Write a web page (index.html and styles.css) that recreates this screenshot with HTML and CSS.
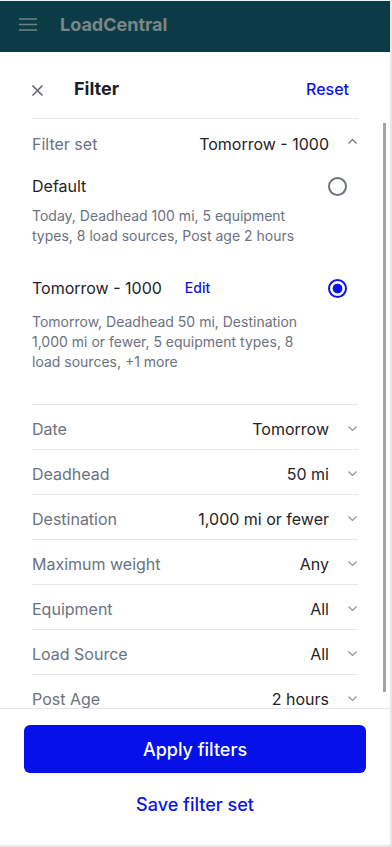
FILE: index.html
```html
<!DOCTYPE html>
<html lang="en">
<head>
<meta charset="utf-8">
<title>LoadCentral – Filter</title>
<link rel="stylesheet" href="styles.css">
</head>
<body>
<div class="app">
  <header class="topbar">
    <svg class="burger" width="18" height="13" viewBox="0 0 18 13" aria-hidden="true">
      <path d="M0 1h18M0 6.5h18M0 12h18" stroke="#6f8287" stroke-width="1.6"/>
    </svg>
    <span class="brand">LoadCentral</span>
  </header>

  <div class="panel">
    <div class="panel-head">
      <svg class="close" width="11" height="11" viewBox="0 0 11 11" aria-hidden="true">
        <path d="M0.5 0.5l10 10M10.5 0.5l-10 10" stroke="#5f6368" stroke-width="1.5"/>
      </svg>
      <h1 class="title">Filter</h1>
      <a class="reset">Reset</a>
    </div>

    <div class="scroll">
      <div class="scroll-content">
        <div class="row">
          <span class="label">Filter set</span>
          <span class="value">Tomorrow - 1000</span>
          <svg class="chev up" width="9" height="5" viewBox="0 0 9 5" aria-hidden="true">
            <path d="M0.5 4.5l4-4 4 4" fill="none" stroke="#6b7280" stroke-width="1.2"/>
          </svg>
        </div>

        <div class="options">
          <div class="option">
            <div class="option-title">
              <span>Default</span>
              <span class="radio"></span>
            </div>
            <p class="option-desc">Today, Deadhead 100 mi, 5 equipment types, 8 load sources, Post age 2 hours</p>
          </div>
          <div class="option">
            <div class="option-title">
              <span>Tomorrow - 1000</span>
              <a class="edit">Edit</a>
              <span class="radio checked"></span>
            </div>
            <p class="option-desc">Tomorrow, Deadhead 50 mi, Destination 1,000 mi or fewer, 5 equipment types, 8 load sources, +1 more</p>
          </div>
        </div>

        <div class="row bordered">
          <span class="label">Date</span><span class="value">Tomorrow</span>
          <svg class="chev" width="9" height="5" viewBox="0 0 9 5" aria-hidden="true"><path d="M0.5 0.5l4 4 4-4" fill="none" stroke="#8b9099" stroke-width="1.1"/></svg>
        </div>
        <div class="row bordered">
          <span class="label">Deadhead</span><span class="value">50 mi</span>
          <svg class="chev" width="9" height="5" viewBox="0 0 9 5" aria-hidden="true"><path d="M0.5 0.5l4 4 4-4" fill="none" stroke="#8b9099" stroke-width="1.1"/></svg>
        </div>
        <div class="row bordered">
          <span class="label">Destination</span><span class="value">1,000 mi or fewer</span>
          <svg class="chev" width="9" height="5" viewBox="0 0 9 5" aria-hidden="true"><path d="M0.5 0.5l4 4 4-4" fill="none" stroke="#8b9099" stroke-width="1.1"/></svg>
        </div>
        <div class="row bordered">
          <span class="label">Maximum weight</span><span class="value">Any</span>
          <svg class="chev" width="9" height="5" viewBox="0 0 9 5" aria-hidden="true"><path d="M0.5 0.5l4 4 4-4" fill="none" stroke="#8b9099" stroke-width="1.1"/></svg>
        </div>
        <div class="row bordered">
          <span class="label">Equipment</span><span class="value">All</span>
          <svg class="chev" width="9" height="5" viewBox="0 0 9 5" aria-hidden="true"><path d="M0.5 0.5l4 4 4-4" fill="none" stroke="#8b9099" stroke-width="1.1"/></svg>
        </div>
        <div class="row bordered">
          <span class="label">Load Source</span><span class="value">All</span>
          <svg class="chev" width="9" height="5" viewBox="0 0 9 5" aria-hidden="true"><path d="M0.5 0.5l4 4 4-4" fill="none" stroke="#8b9099" stroke-width="1.1"/></svg>
        </div>
        <div class="row bordered">
          <span class="label">Post Age</span><span class="value">2 hours</span>
          <svg class="chev" width="9" height="5" viewBox="0 0 9 5" aria-hidden="true"><path d="M0.5 0.5l4 4 4-4" fill="none" stroke="#8b9099" stroke-width="1.1"/></svg>
        </div>
      </div>
      <div class="scrollbar"></div>
    </div>

    <footer class="footer">
      <button class="apply">Apply filters</button>
      <a class="save">Save filter set</a>
    </footer>
  </div>
</div>
</body>
</html>
```

FILE: styles.css
```css
* { box-sizing: border-box; }

html, body {
  margin: 0;
  padding: 0;
  background: #ffffff;
}

body {
  font-family: Inter, "Noto Sans", "Liberation Sans", sans-serif;
  color: #1f2329;
}

.app {
  width: 392px;
  height: 847px;
  display: flex;
  flex-direction: column;
  border-top: 1px solid #f1f1f1;
  border-right: 2px solid #e7e7e7;
  border-bottom: 2px solid #e7e7e7;
}

.topbar {
  height: 51px;
  flex: none;
  background: #0b3c46;
  display: flex;
  align-items: flex-start;
  padding: 12px 0 0 19px;
}

.burger { display: block; margin-top: 5px; }

.brand {
  margin-left: 23px;
  font-size: 18px;
  line-height: 24px;
  font-weight: 700;
  color: #7d8587;
}

.panel {
  flex: 1;
  min-height: 0;
  display: flex;
  flex-direction: column;
}

.panel-head {
  flex: none;
  margin: 0 32px;
  height: 67px;
  padding-top: 25px;
  border-bottom: 1px solid #e5e7eb;
  display: flex;
  align-items: flex-start;
}

.close { display: block; margin-top: 8px; }

.title {
  margin: 0 0 0 31px;
  font-size: 18px;
  line-height: 24px;
  font-weight: 700;
  color: #1b1f27;
}

.reset {
  margin-left: auto;
  margin-right: 9px;
  font-size: 16px;
  line-height: 24px;
  font-weight: 500;
  color: #0b16e6;
}

.scroll {
  flex: 1;
  min-height: 0;
  overflow: hidden;
  position: relative;
}

.scroll-content {
  padding: 0 32px;
}

.scrollbar {
  position: absolute;
  left: 383px;
  top: 4px;
  width: 3px;
  height: 569px;
  background: #a3a3a3;
}

.row {
  display: flex;
  align-items: flex-start;
  height: 45px;
  padding-top: 13px;
  font-size: 16px;
  line-height: 24px;
}

.row.bordered {
  border-top: 1px solid #e5e7eb;
  padding-top: 12px;
}

.label {
  color: #6b7280;
}

.value {
  margin-left: auto;
  color: #1f2329;
}

.chev {
  display: block;
  flex: none;
  margin-left: 19px;
  margin-right: 1px;
  margin-top: 9px;
}

.chev.up { margin-top: 7px; }

.options {
  padding-top: 10px;
  padding-bottom: 32px;
  display: flex;
  flex-direction: column;
  gap: 26px;
}

.option-title {
  display: flex;
  align-items: center;
  font-size: 16px;
  line-height: 24px;
  color: #1f2329;
}

.edit {
  margin-left: 23px;
  padding: 4px 0;
  font-size: 14px;
  line-height: 24px;
  font-weight: 500;
  color: #0b16e6;
}

.option-desc {
  margin: 8px 0 0;
  max-width: 280px;
  font-size: 14px;
  line-height: 20px;
  color: #6b7280;
}

.radio {
  flex: none;
  width: 19px;
  height: 19px;
  margin-left: auto;
  margin-right: 11px;
  border-radius: 50%;
  border: 2px solid #6b7280;
}

.radio.checked {
  border-color: #0b16e6;
  background: radial-gradient(circle, #0b16e6 0 4.6px, #ffffff 5.2px);
}

.footer {
  flex: none;
  height: 137px;
  border-top: 1px solid #e5e7eb;
  padding: 16px 24px 0;
  display: flex;
  flex-direction: column;
  align-items: center;
}

.apply {
  width: 100%;
  height: 48px;
  flex: none;
  border: none;
  border-radius: 6px;
  background: #0511e8;
  color: #ffffff;
  font-family: inherit;
  font-size: 18px;
  font-weight: 500;
}

.save {
  margin-top: 21px;
  font-size: 18px;
  line-height: 22px;
  font-weight: 500;
  color: #0b16e6;
}
```
